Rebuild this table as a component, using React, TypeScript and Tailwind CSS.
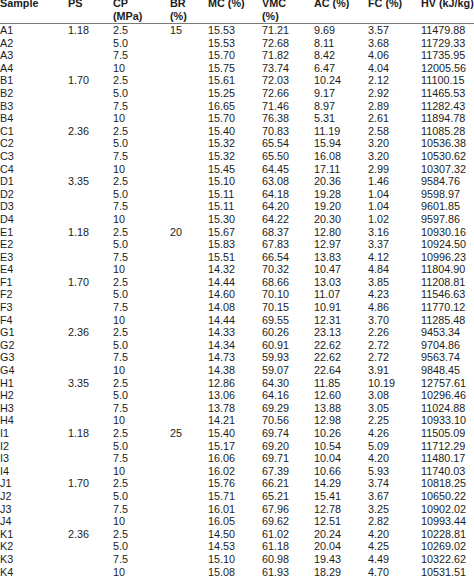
const COLS = 'grid grid-cols-[68px_45px_57px_38px_54px_52px_54px_53px_1fr]'

type Row = [string, string, string, string, string, string, string, string, string]

const ROWS: Row[] = [
  ['A1', '1.18', '2.5', '15', '15.53', '71.21', '9.69', '3.57', '11479.88'],
  ['A2', '', '5.0', '', '15.53', '72.68', '8.11', '3.68', '11729.33'],
  ['A3', '', '7.5', '', '15.70', '71.82', '8.42', '4.06', '11735.95'],
  ['A4', '', '10', '', '15.75', '73.74', '6.47', '4.04', '12005.56'],
  ['B1', '1.70', '2.5', '', '15.61', '72.03', '10.24', '2.12', '11100.15'],
  ['B2', '', '5.0', '', '15.25', '72.66', '9.17', '2.92', '11465.53'],
  ['B3', '', '7.5', '', '16.65', '71.46', '8.97', '2.89', '11282.43'],
  ['B4', '', '10', '', '15.70', '76.38', '5.31', '2.61', '11894.78'],
  ['C1', '2.36', '2.5', '', '15.40', '70.83', '11.19', '2.58', '11085.28'],
  ['C2', '', '5.0', '', '15.32', '65.54', '15.94', '3.20', '10536.38'],
  ['C3', '', '7.5', '', '15.32', '65.50', '16.08', '3.20', '10530.62'],
  ['C4', '', '10', '', '15.45', '64.45', '17.11', '2.99', '10307.32'],
  ['D1', '3.35', '2.5', '', '15.10', '63.08', '20.36', '1.46', '9584.76'],
  ['D2', '', '5.0', '', '15.11', '64.18', '19.28', '1.04', '9598.97'],
  ['D3', '', '7.5', '', '15.11', '64.20', '19.20', '1.04', '9601.85'],
  ['D4', '', '10', '', '15.30', '64.22', '20.30', '1.02', '9597.86'],
  ['E1', '1.18', '2.5', '20', '15.67', '68.37', '12.80', '3.16', '10930.16'],
  ['E2', '', '5.0', '', '15.83', '67.83', '12.97', '3.37', '10924.50'],
  ['E3', '', '7.5', '', '15.51', '66.54', '13.83', '4.12', '10996.23'],
  ['E4', '', '10', '', '14.32', '70.32', '10.47', '4.84', '11804.90'],
  ['F1', '1.70', '2.5', '', '14.44', '68.66', '13.03', '3.85', '11208.81'],
  ['F2', '', '5.0', '', '14.60', '70.10', '11.07', '4.23', '11546.63'],
  ['F3', '', '7.5', '', '14.08', '70.15', '10.91', '4.86', '11770.12'],
  ['F4', '', '10', '', '14.44', '69.55', '12.31', '3.70', '11285.48'],
  ['G1', '2.36', '2.5', '', '14.33', '60.26', '23.13', '2.26', '9453.34'],
  ['G2', '', '5.0', '', '14.34', '60.91', '22.62', '2.72', '9704.86'],
  ['G3', '', '7.5', '', '14.73', '59.93', '22.62', '2.72', '9563.74'],
  ['G4', '', '10', '', '14.38', '59.07', '22.64', '3.91', '9848.45'],
  ['H1', '3.35', '2.5', '', '12.86', '64.30', '11.85', '10.19', '12757.61'],
  ['H2', '', '5.0', '', '13.06', '64.16', '12.60', '3.08', '10296.46'],
  ['H3', '', '7.5', '', '13.78', '69.29', '13.88', '3.05', '11024.88'],
  ['H4', '', '10', '', '14.21', '70.56', '12.98', '2.25', '10933.10'],
  ['I1', '1.18', '2.5', '25', '15.40', '69.74', '10.26', '4.26', '11505.09'],
  ['I2', '', '5.0', '', '15.17', '69.20', '10.54', '5.09', '11712.29'],
  ['I3', '', '7.5', '', '16.06', '69.71', '10.04', '4.20', '11480.17'],
  ['I4', '', '10', '', '16.02', '67.39', '10.66', '5.93', '11740.03'],
  ['J1', '1.70', '2.5', '', '15.76', '66.21', '14.29', '3.74', '10818.25'],
  ['J2', '', '5.0', '', '15.71', '65.21', '15.41', '3.67', '10650.22'],
  ['J3', '', '7.5', '', '16.01', '67.96', '12.78', '3.25', '10902.02'],
  ['J4', '', '10', '', '16.05', '69.62', '12.51', '2.82', '10993.44'],
  ['K1', '2.36', '2.5', '', '14.50', '61.02', '20.24', '4.20', '10228.81'],
  ['K2', '', '5.0', '', '14.53', '61.18', '20.04', '4.25', '10269.02'],
  ['K3', '', '7.5', '', '15.10', '60.98', '19.43', '4.49', '10322.62'],
  ['K4', '', '10', '', '15.08', '61.93', '18.29', '4.70', '10531.51'],
]

const HEADERS: string[][] = [
  ['Sample'],
  ['PS'],
  ['CP', '(MPa)'],
  ['BR', '(%)'],
  ['MC (%)'],
  ['VMC', '(%)'],
  ['AC (%)'],
  ['FC (%)'],
  ['HV (kJ/kg)'],
]

export default function App() {
  return (
    <div className="w-[474px] h-[579px] overflow-hidden bg-white text-[#1c1c1c] font-['Liberation_Sans',Arial,sans-serif] text-[10.8px]">
      {/* header, top line is clipped in the source */}
      <div className={`${COLS} -mt-[3px] h-[26px] font-bold leading-[13px] whitespace-nowrap`}>
        {HEADERS.map((lines, i) => (
          <div key={i}>
            {lines.map((l) => (
              <div key={l}>{l}</div>
            ))}
          </div>
        ))}
      </div>
      <div className="h-px bg-[#7a7a7a]" />

      {ROWS.map((row) => (
        <div key={row[0]} className={`${COLS} h-[12.6px] leading-[12.6px] whitespace-nowrap`}>
          {row.map((cell, i) => (
            <div key={i}>{cell}</div>
          ))}
        </div>
      ))}
    </div>
  )
}
